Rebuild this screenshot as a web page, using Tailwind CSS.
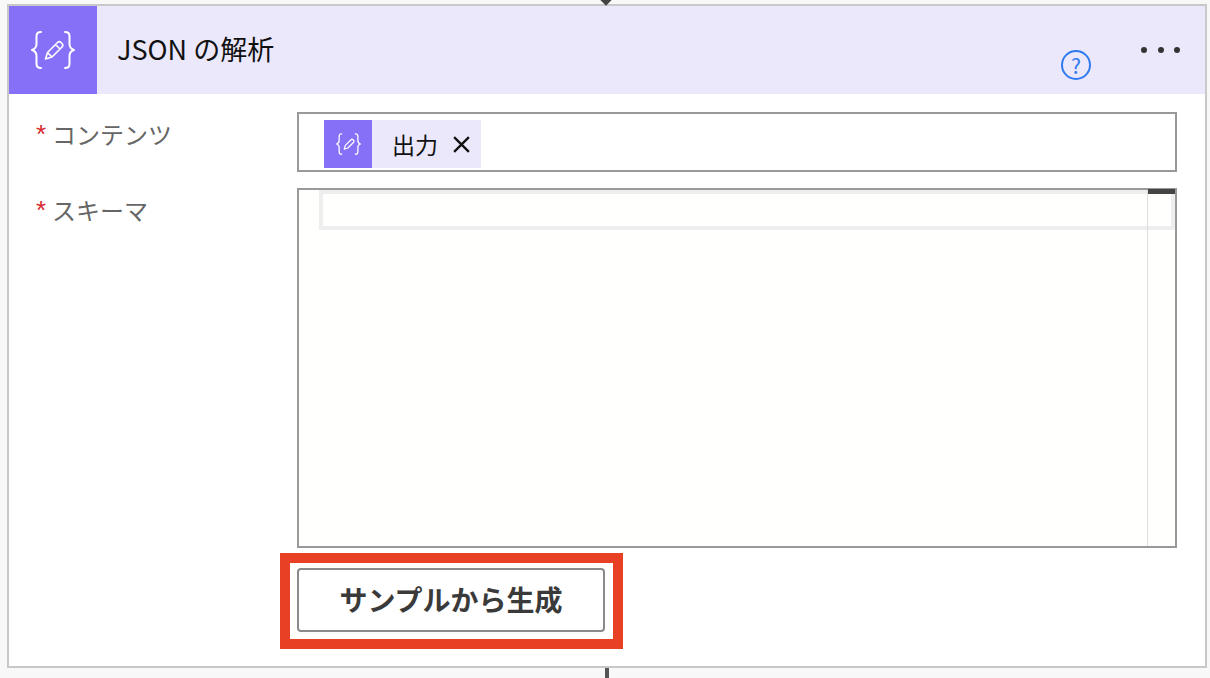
<!DOCTYPE html>
<html lang="ja">
<head>
    <meta charset="UTF-8">
    <title>JSON の解析</title>
    <script src="https://cdn.jsdelivr.net/npm/@tailwindcss/browser@4"></script>
</head>
<body class="w-[1210px] h-[678px] overflow-hidden bg-[#f8f8f8] font-['Noto_Sans_CJK_JP','Noto_Sans',sans-serif]">
    <div class="relative h-[678px] pt-1 pl-[7px]">
        <!-- connector arrow on top -->
        <div class="absolute left-[602px] -top-[4px] w-2 h-2 rotate-45 bg-[#444]"></div>

        <div class="w-[1200px] h-[664px] border-2 border-[#c8c8c8] bg-white">
            <!-- header -->
            <div class="flex h-[88px] bg-[#ebe8fc]">
                <div class="flex items-center justify-center w-[88px] bg-[#8570f7]">
                    <svg width="44" height="38" viewBox="0 0 44 38" fill="none" stroke="white" stroke-linecap="round" stroke-linejoin="round">
                        <path stroke-width="2" d="M10 1C7 1 5.500 2.500 5.500 5v8c0 3-1.500 5-4.500 6 3 1 4.500 3 4.500 6v8c0 2.500 1.500 4 4.500 4"/>
                        <path stroke-width="2" d="M34 1c3 0 4.500 1.500 4.500 4v8c0 3 1.500 5 4.500 6-3 1-4.500 3-4.500 6v8c0 2.500-1.500 4-4.500 4"/>
                        <path stroke-width="1.600" d="M14.500 28l2-6.500 10-10c1-1 2.500-1 3.500 0l1 1c1 1 1 2.500 0 3.500l-10 10z M16.500 21.500l4.500 4.500 M24.500 13.500l4.500 4.500"/>
                    </svg>
                </div>
                <div class="pl-5 pt-[25px] text-[27px] leading-[36px] text-[#111]">JSON の解析</div>
                <div class="ml-auto flex items-start">
                    <div class="mt-[44px] mr-[50px] flex items-center justify-center w-[30px] h-[30px] rounded-full border-2 border-[#2f7af0] text-[21px] leading-none text-[#2f7af0]">?</div>
                    <div class="mt-[41px] mr-[25px] flex gap-[10.5px]">
                        <span class="w-[6px] h-[6px] rounded-full bg-[#333]"></span>
                        <span class="w-[6px] h-[6px] rounded-full bg-[#333]"></span>
                        <span class="w-[6px] h-[6px] rounded-full bg-[#333]"></span>
                    </div>
                </div>
            </div>

            <!-- form -->
            <div class="pt-[18px] pl-[27px]">
                <div class="flex h-[60px]">
                    <div class="flex w-[261px] pt-[7px] text-[24px] leading-[30px] text-[#666]"><span class="w-[16px] font-['Liberation_Sans',sans-serif] text-[26px] text-[#d8282f]">*</span>コンテンツ</div>
                    <div class="w-[880px] border-2 border-[#999] pt-1.5 pl-[25px]">
                        <div class="flex items-center w-[157px] h-12 bg-[#ebe8fc]">
                            <div class="flex items-center justify-center w-12 h-12 bg-[#8570f7]">
                                <svg width="25" height="22" viewBox="0 0 44 38" fill="none" stroke="white" stroke-linecap="round" stroke-linejoin="round">
                                    <path stroke-width="2.200" d="M10 1C7 1 5.500 2.500 5.500 5v8c0 3-1.500 5-4.500 6 3 1 4.500 3 4.500 6v8c0 2.500 1.500 4 4.500 4"/>
                                    <path stroke-width="2.200" d="M34 1c3 0 4.500 1.500 4.500 4v8c0 3 1.500 5 4.500 6-3 1-4.500 3-4.500 6v8c0 2.500-1.500 4-4.500 4"/>
                                    <path stroke-width="2.200" d="M14.500 28l2-6.500 10-10c1-1 2.500-1 3.500 0l1 1c1 1 1 2.500 0 3.500l-10 10z"/>
                                </svg>
                            </div>
                            <span class="ml-5 text-[23px] leading-none text-[#111]">出力</span>
                            <svg class="ml-[14px]" width="19" height="19" viewBox="0 0 18 18" stroke="#111" stroke-width="2.200"><path d="M2 2l14 14M16 2L2 16"/></svg>
                        </div>
                    </div>
                </div>

                <div class="flex h-[360px] mt-4">
                    <div class="flex w-[261px] pt-[7px] text-[24px] leading-[30px] text-[#666]"><span class="w-[16px] font-['Liberation_Sans',sans-serif] text-[26px] text-[#d8282f]">*</span>スキーマ</div>
                    <div class="relative w-[880px] border-2 border-[#999] bg-[#fffffd]">
                        <div class="absolute left-5 top-0 right-0 h-10 border-4 border-[#eeeeee]"></div>
                        <div class="absolute left-[848px] top-0 bottom-0 w-px bg-[#ddd]"></div>
                        <div class="absolute left-[849px] -top-px right-0 h-[5px] bg-[#444]"></div>
                    </div>
                </div>

                <div class="ml-[244px] mt-[5px] w-[343px] h-24 border-[10px] border-[#e84024] pt-[5px] pl-[7px]">
                    <button class="w-[308px] h-16 pb-[3px] rounded-[4px] border-2 border-[#8a8a8a] bg-white text-[28px] font-bold text-[#3a3a3a]">サンプルから生成</button>
                </div>
            </div>
        </div>

        <!-- connector line below -->
        <div class="absolute left-[605px] top-[668px] w-1 h-[10px] bg-[#555]"></div>
    </div>
</body>
</html>
